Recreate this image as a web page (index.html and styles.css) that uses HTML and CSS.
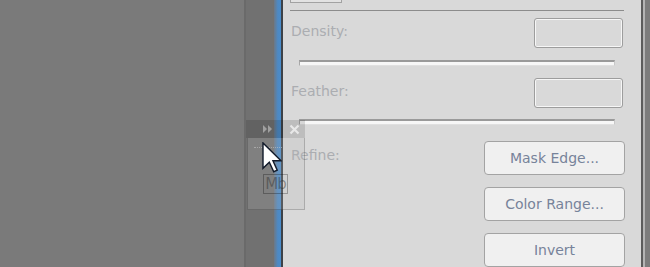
FILE: index.html
```html
<!DOCTYPE html>
<html>
<head>
<meta charset="utf-8">
<link rel="stylesheet" href="styles.css">
</head>
<body>
<div class="screen">
  <div class="left"></div>
  <div class="dock-line"></div>
  <div class="dock"></div>
  <div class="blue"></div>
  <div class="edge"></div>
  <div class="panel">
    <div class="stub"></div>
    <div class="sep"></div>
    <div class="field">
      <span class="label">Density:</span>
      <div class="box"></div>
    </div>
    <div class="slider"></div>
    <div class="field field2">
      <span class="label">Feather:</span>
      <div class="box"></div>
    </div>
    <div class="slider slider2"></div>
    <div class="refine">
      <span class="label refine-label">Refine:</span>
      <div class="buttons">
        <div class="btn">Mask Edge...</div>
        <div class="btn">Color Range...</div>
        <div class="btn">Invert</div>
      </div>
    </div>
  </div>
  <div class="rim"><div class="rim-a"></div><div class="rim-b"></div><div class="rim-c"></div></div>

  <div class="ghost">
    <div class="ghost-head">
      <svg class="ghost-arrows" width="12" height="8" viewBox="0 0 12 8"><path d="M1 0 L5 4 L1 8 Z M6 0 L10 4 L6 8 Z" fill="#a0a0a0"/></svg>
      <svg class="ghost-close" width="11" height="11" viewBox="0 0 11 11"><path d="M1.5 1.5 L9.5 9.5 M9.5 1.5 L1.5 9.5" stroke="#e8e8e8" stroke-width="2.2"/></svg>
    </div>
    <div class="ghost-body">
      <div class="dots"></div>
      <div class="mb">Mb</div>
    </div>
  </div>

  <svg class="cursor" width="20" height="31" viewBox="-0.6 -0.6 12.6 19.6">
    <path d="M0 0 L0 16 L4 12.2 L6.8 18.2 L9 17.2 L6.3 11.3 L11.4 11.3 Z" fill="#ffffff" stroke="#111a2a" stroke-width="0.9" stroke-linejoin="miter"/>
  </svg>
</div>
</body>
</html>
```

FILE: styles.css
```css
html, body {
  margin: 0;
  padding: 0;
}
body {
  width: 650px;
  height: 267px;
  overflow: hidden;
  background: #7a7a7a;
  font-family: "DejaVu Sans", Verdana, sans-serif;
}
.screen {
  position: relative;
  display: flex;
  width: 650px;
  height: 267px;
  overflow: hidden;
}
.left {
  width: 244px;
  background: #7a7a7a;
}
.dock-line {
  width: 2px;
  background: #6a6a6a;
}
.dock {
  width: 28px;
  background: #717171;
}
.blue {
  width: 7px;
  background: linear-gradient(to right, #6c7886 0%, #4d89c4 55%, #4a8cca 100%);
}
.edge {
  width: 2px;
  background: #3d4248;
}
.panel {
  width: 358px;
  box-sizing: border-box;
  padding: 0 17px 0 7px;
  background: #d9d9d9;
  display: flex;
  flex-direction: column;
}
.rim {
  width: 9px;
  display: flex;
}
.rim-a { width: 2px; background: #5c5c5c; }
.rim-b { width: 2px; background: #b4b4b4; }
.rim-c { flex: 1; background: #7c7c7c; }

.stub {
  width: 50px;
  height: 2px;
  border: 1px solid #a2a2a2;
  border-top: none;
  background: #e2e2e2;
}
.sep {
  margin-top: 7px;
  height: 1px;
  border-top: 1px solid #8c8c8c;
  background: #e6e6e6;
}
.field {
  margin-top: 7px;
  height: 30px;
  display: flex;
  justify-content: space-between;
  align-items: flex-start;
}
.field2 {
  margin-top: 12px;
}
.label {
  color: #abadb1;
  font-size: 14px;
  line-height: 17px;
  padding-left: 1px;
  padding-top: 5px;
}
.box {
  width: 89px;
  height: 30px;
  box-sizing: border-box;
  margin-right: 1px;
  border: 1px solid #9d9d9d;
  border-radius: 3px;
  box-shadow: inset 0 0 0 1px #f6f6f6;
  background: #d9d9d9;
}
.slider {
  margin-top: 12px;
  margin-left: 9px;
  width: 316px;
  height: 6px;
  box-sizing: border-box;
  border: 1px solid #a8a8a8;
  border-top: 2px solid #9a9a9a;
  border-right-color: #c8c8c8;
  border-bottom-color: #e0e0e0;
  background: #f7f7f7;
}
.slider2 {
  margin-top: 11px;
  height: 7px;
}
.refine {
  margin-top: 16px;
  display: flex;
  justify-content: space-between;
  align-items: flex-start;
}
.refine-label {
  padding-top: 6px;
}
.buttons {
  display: flex;
  flex-direction: column;
  gap: 12px;
  margin-right: -1px;
}
.btn {
  width: 141px;
  height: 34px;
  box-sizing: border-box;
  border: 1px solid #a3a3a3;
  border-radius: 4px;
  background: #f0f0f0;
  color: #77839a;
  font-size: 14px;
  display: flex;
  align-items: center;
  justify-content: center;
}

/* dragged panel ghost */
.ghost {
  position: absolute;
  left: 246px;
  top: 120px;
  width: 59px;
  height: 90px;
  display: flex;
  flex-direction: column;
}
.ghost-head {
  height: 18px;
  background: rgba(0, 0, 0, 0.13);
  display: flex;
  align-items: center;
  padding: 0 5px 0 16px;
}
.ghost-close {
  margin-left: auto;
}
.ghost-body {
  flex: 1;
  margin-left: 1px;
  border: 1px solid rgba(0, 0, 0, 0.18);
  border-top: none;
  background: rgba(180, 180, 180, 0.22);
  display: flex;
  flex-direction: column;
  align-items: flex-start;
}
.dots {
  margin: 9px 0 0 6px;
  width: 28px;
  height: 0;
  border-top: 1px dotted rgba(200, 200, 200, 0.55);
}
.mb {
  margin: 26px 0 0 15px;
  width: 25px;
  height: 20px;
  box-sizing: border-box;
  border: 1px solid rgba(0, 0, 0, 0.28);
  color: rgba(40, 40, 40, 0.42);
  font-size: 15px;
  line-height: 18px;
  text-align: center;
  letter-spacing: -1px;
  overflow: hidden;
}
.cursor {
  position: absolute;
  left: 262px;
  top: 142px;
}
```
